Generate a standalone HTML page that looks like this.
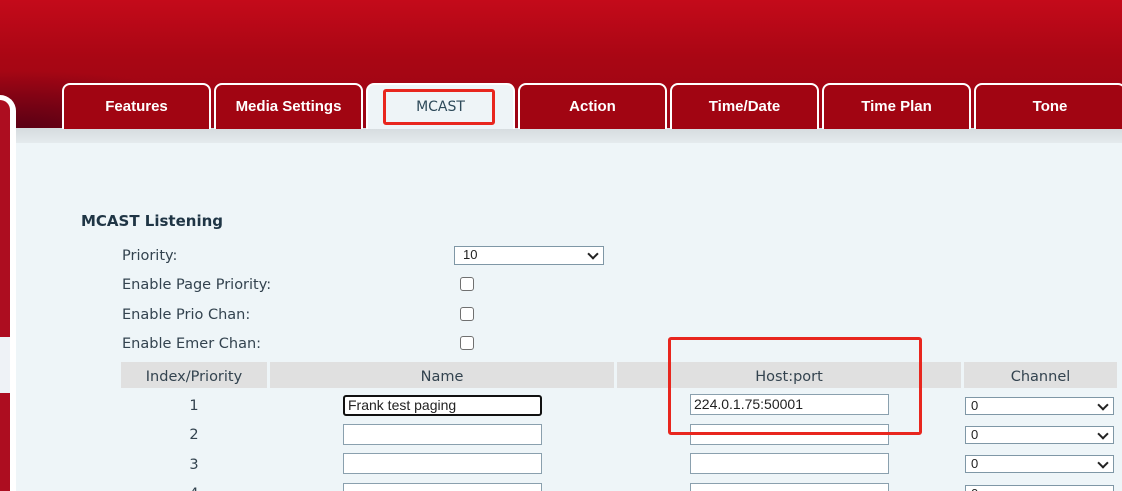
<!DOCTYPE html>
<html style="width:1122px;height:491px;overflow:hidden"><head><style>
*{box-sizing:border-box;margin:0;padding:0}
body{width:1122px;height:491px;overflow:hidden;position:relative;background:#eef5f8;font-family:"DejaVu Sans","Liberation Sans",sans-serif;color:#2e4150}
.a{position:absolute}
.hdr{left:0;top:0;width:1122px;height:128px;background:linear-gradient(180deg,#c40a1a 0%,#a90614 45%,#9a0414 100%)}
.hdrl{left:0;top:70px;width:240px;height:58px;background:radial-gradient(ellipse at 10% 100%,rgba(80,0,20,.85) 0%,rgba(80,0,20,0) 70%)}
.band{left:16px;top:128px;width:1106px;height:15px;background:linear-gradient(#d6dcdf,#e4eaed)}
.tab{top:83px;height:46px;width:149px;border:2px solid #fff;border-bottom:none;border-radius:8px 8px 0 0;background:#a10512;color:#fff;font-size:15px;font-weight:bold;font-family:"Liberation Sans",sans-serif;text-align:center;line-height:44px}
.tab.on{background:#eef4f7;color:#2e4a5a;font-weight:normal;font-family:"DejaVu Sans",sans-serif;font-size:14px}
.side{left:0;top:95px;width:16px;height:400px;background:#fff;border-radius:0 18px 0 0}
.sidein{left:0;top:100px;width:10px;height:391px;background:#ad0d20;border-radius:0 12px 0 0}
.lbl{font-size:14.5px;left:122px;color:#33434f}
.cb{width:14px;height:14px;border:1px solid #707070;border-radius:3px;background:#fff;left:460px}
.sel{background:#fff;border:1px solid #7f97a6;font-size:13px;font-family:"Liberation Sans",sans-serif;color:#222;padding-left:8px;line-height:16px}
.sel:after{content:"";position:absolute;right:6px;top:3px;width:6px;height:6px;border-right:2px solid #222;border-bottom:2px solid #222;transform:rotate(45deg)}
.th{top:362px;height:26px;background:#e0e0e0;text-align:center;font-size:14.5px;line-height:30px;color:#33434f}
.in{background:#fff;border:1px solid #8aa0ae;height:21px;width:199px;font-family:"Liberation Sans",sans-serif;font-size:14px;color:#222;padding-left:3px;line-height:19px}
.idx{left:121px;width:146px;text-align:center;font-size:14.5px;color:#33434f}
.red{border:3px solid #e8261e;border-radius:3px}
</style></head><body>
<div class="a hdr"></div><div class="a hdrl"></div>
<div class="a band"></div>
<div class="a side"></div><div class="a sidein"></div>
<div class="a" style="left:0;top:337px;width:10px;height:56px;background:#eef2f6"></div>
<div class="a tab" style="left:62px">Features</div>
<div class="a tab" style="left:214px">Media Settings</div>
<div class="a tab on" style="left:366px">MCAST</div>
<div class="a tab" style="left:518px">Action</div>
<div class="a tab" style="left:670px">Time/Date</div>
<div class="a tab" style="left:822px">Time Plan</div>
<div class="a tab" style="left:974px;width:152px">Tone</div>
<div class="a red" style="left:383px;top:89px;width:112px;height:36px"></div>

<div class="a" style="left:81px;top:212px;font-size:15px;font-weight:bold;color:#1f3545">MCAST Listening</div>
<div class="a lbl" style="top:248px">Priority:</div>
<div class="a lbl" style="top:277px">Enable Page Priority:</div>
<div class="a lbl" style="top:307px">Enable Prio Chan:</div>
<div class="a lbl" style="top:336px">Enable Emer Chan:</div>
<div class="a sel" style="left:454px;top:246px;width:150px;height:19px">10</div>
<div class="a cb" style="top:277px"></div>
<div class="a cb" style="top:307px"></div>
<div class="a cb" style="top:336px"></div>

<div class="a th" style="left:121px;width:146px">Index/Priority</div>
<div class="a th" style="left:270px;width:344px">Name</div>
<div class="a th" style="left:617px;width:344px">Host:port</div>
<div class="a th" style="left:964px;width:153px">Channel</div>

<div class="a idx" style="top:398px">1</div>
<div class="a idx" style="top:427px">2</div>
<div class="a idx" style="top:457px">3</div>
<div class="a idx" style="top:486px">4</div>

<div class="a in" style="left:343px;top:395px;border:2px solid #111;border-radius:3px;line-height:17px">Frank test paging</div>
<div class="a in" style="left:343px;top:424px"></div>
<div class="a in" style="left:343px;top:453px"></div>
<div class="a in" style="left:343px;top:483px"></div>
<div class="a in" style="left:690px;top:394px">224.0.1.75:50001</div>
<div class="a in" style="left:690px;top:424px"></div>
<div class="a in" style="left:690px;top:453px"></div>
<div class="a in" style="left:690px;top:483px"></div>
<div class="a sel" style="left:965px;top:397px;width:149px;height:18px;padding-left:5px">0</div>
<div class="a sel" style="left:965px;top:426px;width:149px;height:18px;padding-left:5px">0</div>
<div class="a sel" style="left:965px;top:455px;width:149px;height:18px;padding-left:5px">0</div>
<div class="a sel" style="left:965px;top:485px;width:149px;height:18px;padding-left:5px">0</div>

<div class="a red" style="left:668px;top:337px;width:254px;height:98px"></div>
</body></html>
